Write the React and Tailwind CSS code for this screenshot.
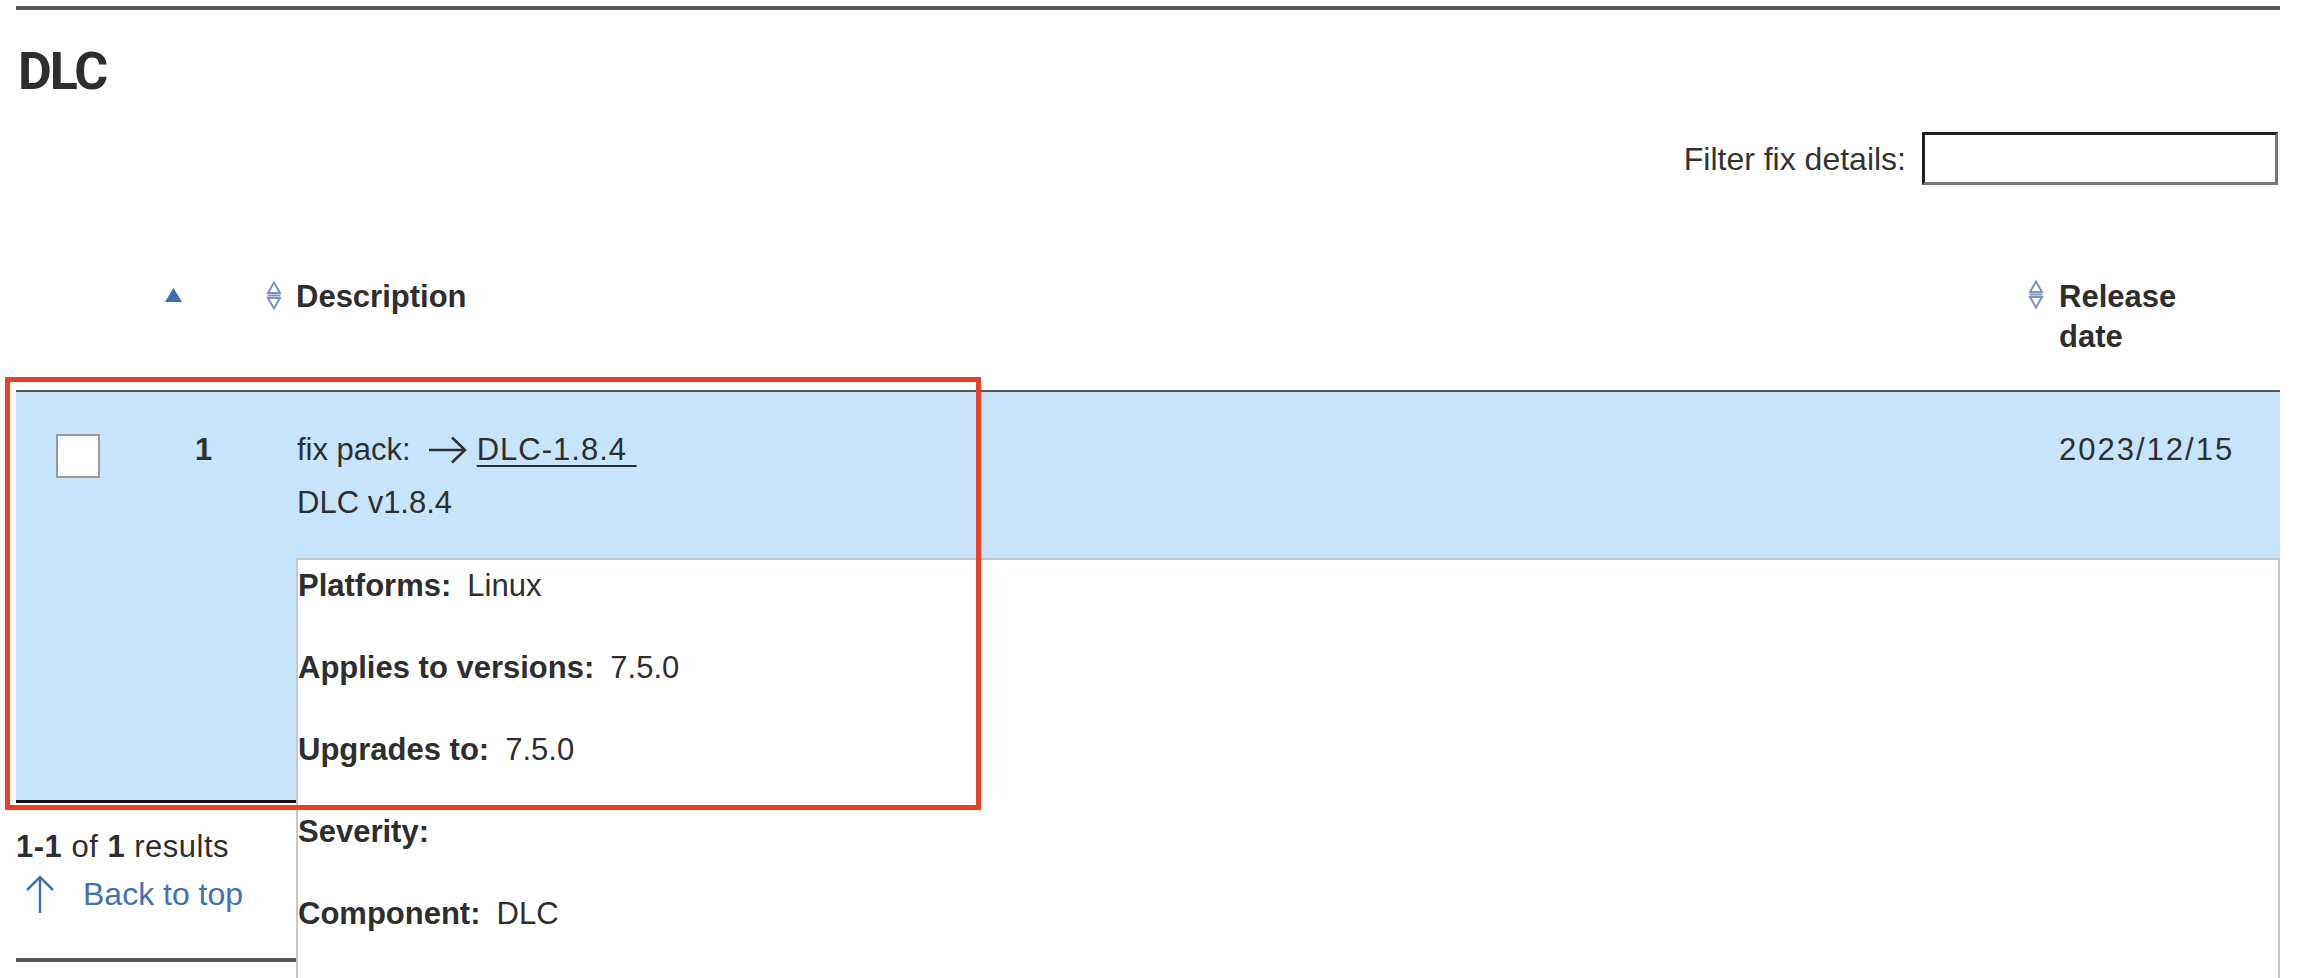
import React from 'react';

const SortBoth = () => (
    <svg width="16" height="29" viewBox="0 0 16 29" fill="none" stroke="#7f92c0" strokeWidth="2">
        <path d="M8 1.5 L14 12 H2 Z" />
        <path d="M1.5 14.5 H14.5" />
        <path d="M2 17 H14 L8 27.5 Z" />
    </svg>
);

const SortUp = () => (
    <svg width="17" height="14" viewBox="0 0 17 14">
        <polygon points="8.5,0 17,14 0,14" fill="#3d6bb5" />
    </svg>
);

const details = [
    { label: 'Platforms:', value: 'Linux' },
    { label: 'Applies to versions:', value: '7.5.0' },
    { label: 'Upgrades to:', value: '7.5.0' },
    { label: 'Severity:', value: '' },
    { label: 'Component:', value: 'DLC' },
];

export default function App() {
    return (
        <div className="relative h-[978px] w-[2322px] overflow-hidden bg-white font-['Liberation_Sans',Arial,sans-serif] text-[31px] leading-[40px] text-[#2e2e2e]">
            <div className="ml-[16px] w-[2264px]">
                <div className="mt-[6px] h-[4px] bg-[#555]" />

                <h1 className="mt-[36px] pl-[2px] font-['Roboto',sans-serif] text-[52px] font-bold leading-[52px] tracking-[-2px]">
                    DLC
                </h1>

                {/* filter */}
                <div className="mt-[34px] flex h-[53px] items-center justify-end pr-[2px]">
                    <label className="text-[32px] text-[#333]">Filter fix details:</label>
                    <input
                        type="text"
                        className="ml-[16px] h-[53px] w-[356px] border-[3px] border-t-[#1f1f1f] border-l-[#1f1f1f] border-r-[#767676] border-b-[#767676] bg-white outline-none"
                    />
                </div>

                {/* table header */}
                <div className="flex border-b-2 border-[#555] pt-[92px] pb-[33px] font-bold">
                    <div className="flex w-[250px] pl-[149px]">
                        <div className="mt-[11px]">
                            <SortUp />
                        </div>
                    </div>
                    <div className="flex flex-1 items-start">
                        <div className="mt-[4px]">
                            <SortBoth />
                        </div>
                        <span className="ml-[14px]">Description</span>
                    </div>
                    <div className="flex w-[252px] items-start">
                        <div className="mt-[3px]">
                            <SortBoth />
                        </div>
                        <span className="ml-[15px]">
                            Release
                            <br />
                            date
                        </span>
                    </div>
                </div>

                {/* row */}
                <div className="flex items-start">
                    <div className="w-[280px]">
                        <div className="flex h-[411px] items-start border-b-[3px] border-[#111] bg-[#c8e4fa] pt-[38px]">
                            <div className="ml-[40px] mt-[4px] h-[44px] w-[44px] border-2 border-[#9a9a9a] bg-white" />
                            <span className="ml-[95px] font-bold">1</span>
                        </div>
                        <div className="mt-[24px] tracking-[0.5px]">
                            <b>1-1</b> of <b>1</b> results
                        </div>
                        <a href="#top" className="mt-[7px] flex items-center text-[#4670ad]">
                            <svg width="30" height="38" viewBox="0 0 30 38" fill="none" stroke="#4670ad" strokeWidth="2.5" className="ml-[9px]">
                                <path d="M15 2 V38" />
                                <path d="M2 15 L15 2 L28 15" />
                            </svg>
                            <span className="ml-[28px] text-[32px]">Back to top</span>
                        </a>
                        <div className="mt-[44px] h-[4px] bg-[#575757]" />
                    </div>

                    <div className="flex-1">
                        <div className="flex bg-[#c8e4fa] pt-[38px] pb-[35px]">
                            <div className="flex-1 pl-[1px]">
                                <div className="flex items-center">
                                    <span>fix pack:</span>
                                    <svg width="38" height="28" viewBox="0 0 38 28" fill="none" stroke="#2e2e2e" strokeWidth="2.5" className="ml-[18px]">
                                        <path d="M0 14 H36" />
                                        <path d="M23 1.5 L36 14 L23 26.5" />
                                    </svg>
                                    <a href="#fix" className="ml-[10px] tracking-[1px] underline decoration-2 underline-offset-[5px]">
                                        DLC-1.8.4&nbsp;
                                    </a>
                                </div>
                                <div className="mt-[13px]">DLC v1.8.4</div>
                            </div>
                            <div className="w-[221px] tracking-[2px]">2023/12/15</div>
                        </div>
                        <div className="flex h-[600px] flex-col gap-[42px] border-x-2 border-t-2 border-[#c8c8c8] bg-white pt-[6px]">
                            {details.map((d) => (
                                <div key={d.label}>
                                    <b>{d.label}</b>
                                    {d.value && <span className="ml-[16px]">{d.value}</span>}
                                </div>
                            ))}
                        </div>
                    </div>
                </div>
            </div>

            {/* annotation box */}
            <div className="pointer-events-none absolute left-[5px] top-[377px] h-[433px] w-[976px] border-[5px] border-[#e8412a]" />
        </div>
    );
}
